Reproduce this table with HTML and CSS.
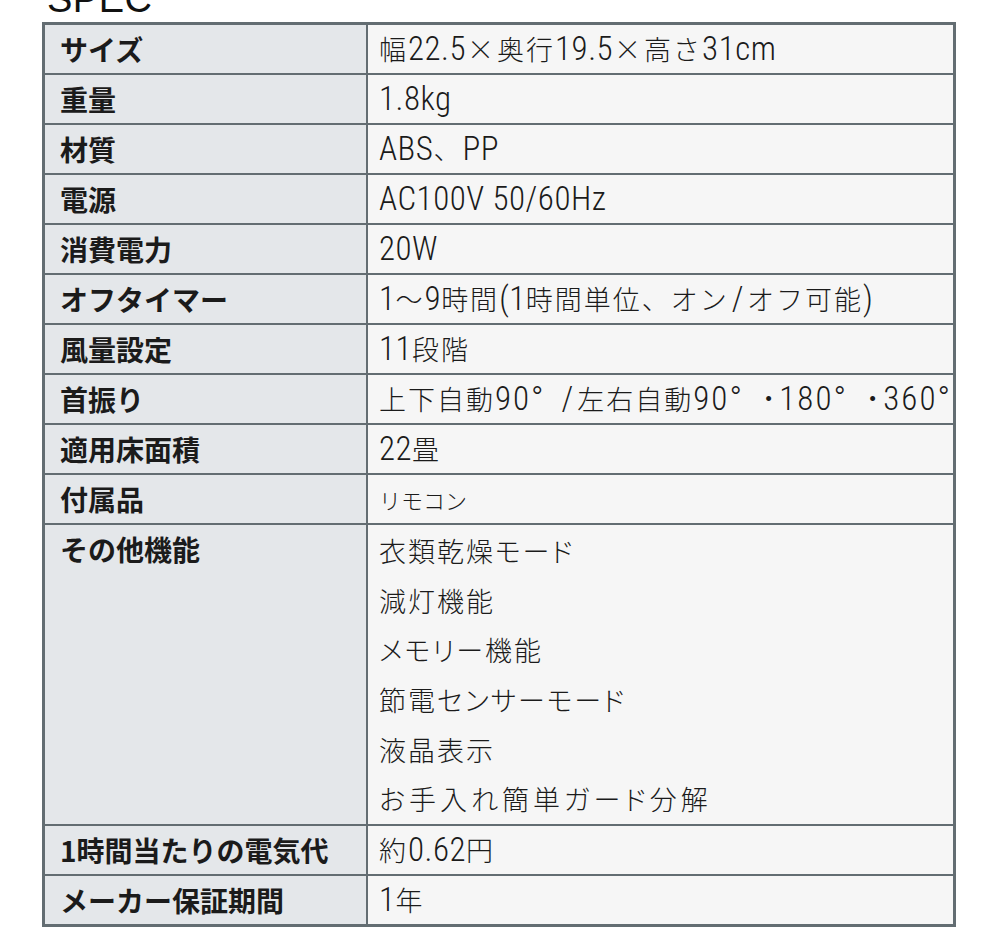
FILE: index.html
```html
<!DOCTYPE html>
<html lang="ja">
<head>
<meta charset="utf-8">
<title>SPEC</title>
<link rel="stylesheet" href="styles.css">
</head>
<body>
<div class="page">
  <h2 class="title">SPEC</h2>
  <table class="spec">
    <tr><th>サイズ</th><td>幅<span class="n">22.5</span><span class="x">×</span>奥行<span class="n">19.5</span><span class="x">×</span>高さ<span class="n">31cm</span></td></tr>
    <tr><th>重量</th><td><span class="n">1.8kg</span></td></tr>
    <tr><th>材質</th><td><span class="n">ABS</span>、<span class="n">PP</span></td></tr>
    <tr><th>電源</th><td><span class="n">AC100V 50/60Hz</span></td></tr>
    <tr><th>消費電力</th><td><span class="n">20W</span></td></tr>
    <tr><th>オフタイマー</th><td><span class="n">1</span>～<span class="n">9</span>時間<span class="n">(1</span>時間単位、オン<span class="n sl">/</span>オフ可能<span class="n">)</span></td></tr>
    <tr><th>風量設定</th><td><span class="n">11</span>段階</td></tr>
    <tr class="swing"><th>首振り</th><td>上下自動<span class="n">90°</span><span class="n sl2">/</span>左右自動<span class="n">90°</span><span class="n dot">·</span><span class="n">180°</span><span class="n dot">·</span><span class="n">360°</span></td></tr>
    <tr><th>適用床面積</th><td><span class="n">22</span>畳</td></tr>
    <tr><th>付属品</th><td class="small">リモコン</td></tr>
    <tr class="multi"><th>その他機能</th><td>
      <div class="line">衣類乾燥モード</div>
      <div class="line">減灯機能</div>
      <div class="line">メモリー機能</div>
      <div class="line">節電センサーモード</div>
      <div class="line">液晶表示</div>
      <div class="line spread">お手入れ簡単ガード分解</div>
    </td></tr>
    <tr><th>1時間当たりの電気代</th><td>約<span class="n">0.62</span>円</td></tr>
    <tr><th>メーカー保証期間</th><td><span class="n">1</span>年</td></tr>
  </table>
</div>
</body>
</html>
```
FILE: styles.css
```css
html, body {
  margin: 0;
  padding: 0;
  background: #ffffff;
}
.page {
  padding-left: 42px;
  overflow: hidden;
  height: 952px;
}
.title {
  margin: -20px 0 0 5px;
  font-family: "Liberation Sans", Arial, sans-serif;
  font-weight: 400;
  font-size: 38px;
  line-height: 38px;
  height: 42px;
  color: #111111;
  letter-spacing: 0.5px;
}
.spec {
  border-collapse: collapse;
  width: 914px;
  border: 3px solid #636d72;
  font-family: "Noto Sans CJK JP", "Noto Sans", sans-serif;
  color: #1b1b1b;
}
.spec th, .spec td {
  border: 2px solid #636d72;
  padding: 0;
  height: 48px;
  line-height: 48px;
  text-align: left;
  vertical-align: middle;
  white-space: nowrap;
}
.spec th {
  width: 306px;
  padding-left: 15px;
  background: #e4e7ea;
  font-weight: 700;
  font-size: 28px;
}
.spec td {
  padding-left: 11px;
  background: #f6f6f6;
  font-weight: 300;
  font-size: 27px;
  letter-spacing: 2px;
}
.spec .n {
  font-family: "Roboto Condensed", "Open Sans", sans-serif;
  font-stretch: 75%;
  font-weight: 300;
  font-size: 33px;
  line-height: 0;
  letter-spacing: 0.5px;
}
.spec .x {
  margin: 0 1px;
}
.spec .sl {
  margin: 0 3px;
}
.spec .swing .n {
  letter-spacing: 2px;
}
.spec .sl2 {
  margin: 0 2px 0 16px;
}
.spec .swing .dot {
  margin: 0 4px 0 20px;
  font-weight: 700;
}
.spec td.small {
  font-size: 22px;
  letter-spacing: 0;
}
.spec .multi th {
  vertical-align: top;
}
.spec .multi td {
  padding-top: 1px;
}
.spec .line {
  line-height: 49.7px;
  height: 49.7px;
  font-feature-settings: "palt";
}
.spec .line.spread {
  letter-spacing: 4px;
}
```
